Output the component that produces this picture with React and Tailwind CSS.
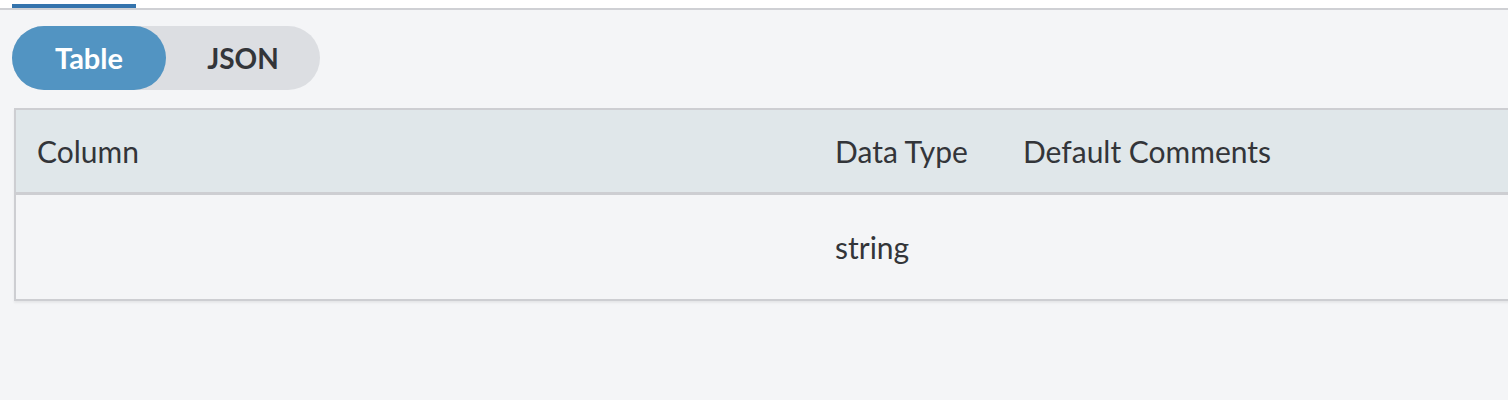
import React, { useState } from 'react';

const COLUMNS = [
  { key: 'column', label: 'Column', width: 'w-[798px]' },
  { key: 'type', label: 'Data Type', width: 'w-[188px]' },
  { key: 'default', label: 'Default Comments', width: 'flex-1' },
];

const ROWS = [{ column: '', type: 'string', default: '' }];

export default function App() {
  const [view, setView] = useState('table');

  return (
    <div
      className="h-[400px] w-[1508px] overflow-hidden bg-[#f4f5f7] text-[#333539]"
      style={{ fontFamily: 'Lato, "Open Sans", sans-serif' }}
    >
      {/* tab strip */}
      <div className="h-[10px] bg-white border-b-2 border-[#cfd0d4] relative">
        <div className="absolute left-[12px] top-[4px] h-[4px] w-[124px] bg-[#3574ad]" />
      </div>

      {/* view toggle */}
      <div className="px-[12px] pt-[16px]">
        <div className="inline-flex h-[64px] w-[308px] rounded-full bg-[#dcdee2]">
          <button
            onClick={() => setView('table')}
            className={`h-full w-[154px] rounded-full text-[29px] font-bold ${
              view === 'table' ? 'bg-[#5294c2] text-white' : 'text-[#333539]'
            }`}
          >
            Table
          </button>
          <button
            onClick={() => setView('json')}
            className={`h-full flex-1 rounded-full text-[28px] font-bold ${
              view === 'json' ? 'bg-[#5294c2] text-white' : 'text-[#333539]'
            }`}
          >
            JSON
          </button>
        </div>
      </div>

      {/* schema table */}
      <div className="ml-[14px] mt-[18px] w-[1520px] border-2 border-r-0 border-[#cdced2] shadow-[0_2px_2px_rgba(0,0,0,0.06)]">
        <div className="flex h-[85px] items-center bg-[#e0e7ea] border-b-[3px] border-[#cdced2] text-[30px]">
          {COLUMNS.map((c) => (
            <div key={c.key} className={`${c.width} pl-[21px]`}>
              {c.label}
            </div>
          ))}
        </div>
        {ROWS.map((r, i) => (
          <div key={i} className="flex h-[104px] items-center text-[30px]">
            {COLUMNS.map((c) => (
              <div key={c.key} className={`${c.width} pl-[21px]`}>
                {r[c.key]}
              </div>
            ))}
          </div>
        ))}
      </div>
    </div>
  );
}
